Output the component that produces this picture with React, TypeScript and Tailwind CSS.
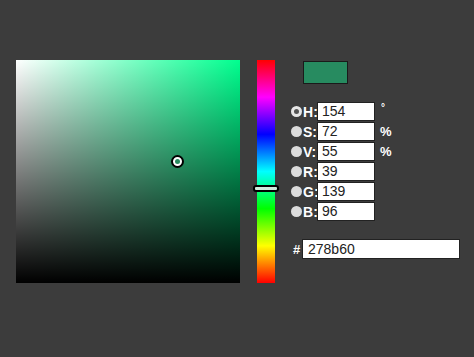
import React from 'react';

const rows = [
  { k: 'H', v: '154', unit: '°', on: true },
  { k: 'S', v: '72', unit: '%' },
  { k: 'V', v: '55', unit: '%' },
  { k: 'R', v: '39' },
  { k: 'G', v: '139' },
  { k: 'B', v: '96' },
];

function Radio({ on }: { on?: boolean }) {
  return on ? (
    <span className="flex size-[11px] items-center justify-center rounded-full bg-[#e6e6e6]">
      <span className="size-[5px] rounded-full bg-[#555]" />
    </span>
  ) : (
    <span className="size-[11px] rounded-full bg-[#dcdcdc]" />
  );
}

export default function App() {
  return (
    <div className="flex h-[357px] w-[474px] bg-[#3c3c3c] pt-[60px] pl-[16px] font-['Liberation_Sans',Arial,sans-serif]">
      {/* saturation / value square */}
      <div className="relative h-[223px] w-[224px] bg-[#00ff8f]">
        <div className="absolute inset-0 bg-[linear-gradient(to_right,#fff,rgba(255,255,255,0))]" />
        <div className="absolute inset-0 bg-[linear-gradient(to_top,#000,rgba(0,0,0,0))]" />
        <div className="absolute left-[155px] top-[95px] flex size-[13px] items-center justify-center rounded-full border-2 border-black bg-white">
          <span className="size-[5px] rounded-full bg-[#278b60]" />
        </div>
      </div>

      {/* hue bar */}
      <div className="relative ml-[17px] h-[223px] w-[18px] bg-[linear-gradient(to_bottom,#f00,#f0f,#00f,#0ff,#0f0,#ff0,#f00)]">
        <div className="absolute -left-[4px] top-[125px] h-[7px] w-[26px] rounded-[3px] border-2 border-black bg-[#cfe9dc]" />
      </div>

      {/* controls */}
      <div className="ml-[16px] flex flex-col">
        <div className="ml-[12px] mt-[1px] h-[23px] w-[45px] border border-[#1a1a1a] bg-[#278b60]" />
        <div className="mt-[18px] flex flex-col gap-[1px]">
          {rows.map((r) => (
            <div key={r.k} className="flex h-[19px] items-center">
              <Radio on={r.on} />
              <span className="ml-[1px] w-[14px] text-[14px] font-bold leading-none text-white">{r.k}:</span>
              <div className="h-[19px] w-[58px] border border-[#222] bg-white pl-[4px] text-[14px] leading-[17px] text-[#222]">
                {r.v}
              </div>
              {r.unit && (
                <span
                  className={
                    r.unit === '%'
                      ? 'ml-[5px] text-[13px] font-bold leading-none text-white'
                      : 'ml-[6px] -mt-[8px] text-[10px] font-bold leading-none text-white'
                  }
                >
                  {r.unit}
                </span>
              )}
            </div>
          ))}
        </div>
        <div className="mt-[18px] flex h-[20px] items-center">
          <span className="ml-[2px] w-[9px] text-[13px] font-bold leading-none text-white">#</span>
          <div className="h-[20px] w-[158px] border border-[#222] bg-white pl-[5px] text-[14px] leading-[18px] text-[#222]">
            278b60
          </div>
        </div>
      </div>
    </div>
  );
}
